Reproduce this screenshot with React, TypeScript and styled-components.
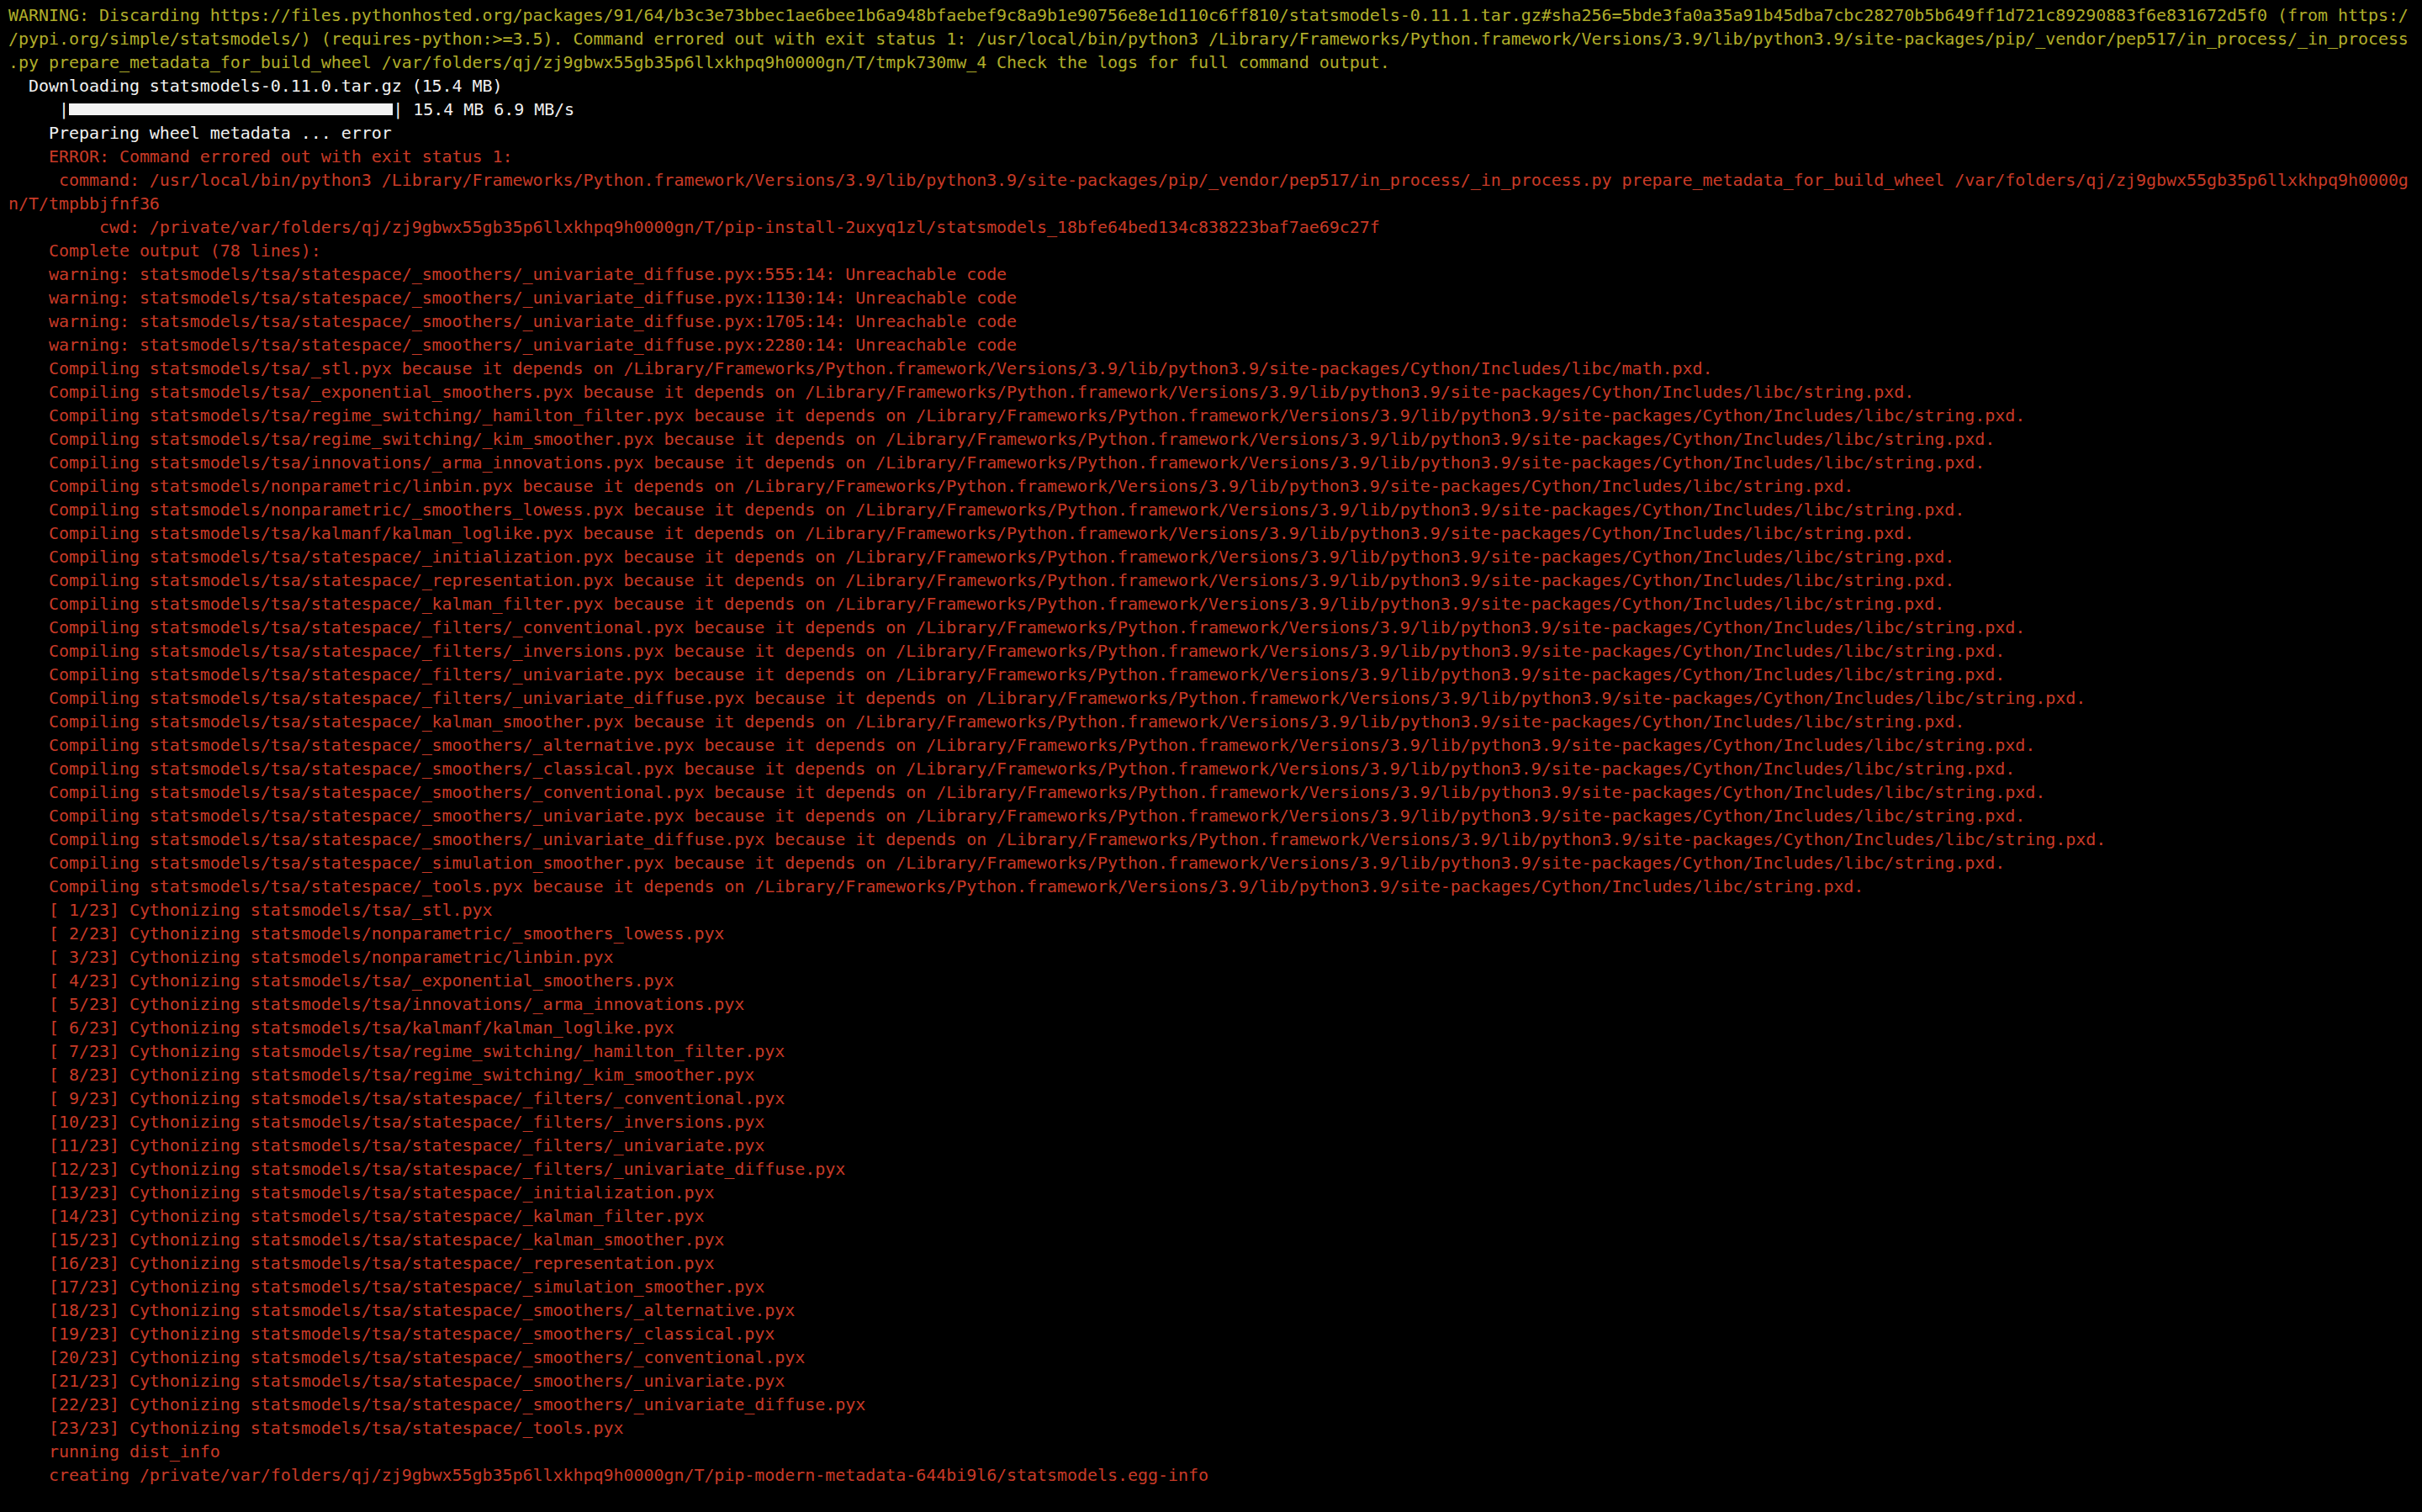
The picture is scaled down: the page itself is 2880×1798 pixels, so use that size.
import React from 'react';
import styled, { createGlobalStyle } from 'styled-components';

const GlobalStyle = createGlobalStyle`
  html, body {
    margin: 0;
    padding: 0;
    background: #000;
  }
`;

type Tone = 'warn' | 'plain' | 'error';

const TONES: Record<Tone, string> = {
  warn: '#b0ad2a',
  plain: '#f0f0f0',
  error: '#c83a27',
};

// Terminal window
const Screen = styled.div`
  box-sizing: border-box;
  width: 2880px;
  height: 1798px;
  overflow: hidden;
  background: #000;
  padding: 4px 0 0 10px;
  font-family: 'DejaVu Sans Mono', 'Liberation Mono', monospace;
  font-size: 20px;
  line-height: 28px;
  letter-spacing: -0.05px;
`;

const Line = styled.div<{ $tone: Tone }>`
  white-space: pre;
  height: 28px;
  color: ${props => TONES[props.$tone]};
`;

const Bar = styled.span`
  display: inline-block;
  width: 32ch;
  height: 14px;
  background: #f2f2f2;
`;

const LIB = '/Library/Frameworks/Python.framework/Versions/3.9/lib/python3.9/site-packages';
const TMP = '/var/folders/qj/zj9gbwx55gb35p6llxkhpq9h0000gn/T';

const header: { text: string; tone: Tone }[] = [
  {
    tone: 'warn',
    text: 'WARNING: Discarding https://files.pythonhosted.org/packages/91/64/b3c3e73bbec1ae6bee1b6a948bfaebef9c8a9b1e90756e8e1d110c6ff810/statsmodels-0.11.1.tar.gz#sha256=5bde3fa0a35a91b45dba7cbc28270b5b649ff1d721c89290883f6e831672d5f0 (from https:/',
  },
  {
    tone: 'warn',
    text: `/pypi.org/simple/statsmodels/) (requires-python:>=3.5). Command errored out with exit status 1: /usr/local/bin/python3 ${LIB}/pip/_vendor/pep517/in_process/_in_process`,
  },
  {
    tone: 'warn',
    text: `.py prepare_metadata_for_build_wheel ${TMP}/tmpk730mw_4 Check the logs for full command output.`,
  },
  { tone: 'plain', text: '  Downloading statsmodels-0.11.0.tar.gz (15.4 MB)' },
];

const compiled = [
  'tsa/_stl.pyx',
  'tsa/_exponential_smoothers.pyx',
  'tsa/regime_switching/_hamilton_filter.pyx',
  'tsa/regime_switching/_kim_smoother.pyx',
  'tsa/innovations/_arma_innovations.pyx',
  'nonparametric/linbin.pyx',
  'nonparametric/_smoothers_lowess.pyx',
  'tsa/kalmanf/kalman_loglike.pyx',
  'tsa/statespace/_initialization.pyx',
  'tsa/statespace/_representation.pyx',
  'tsa/statespace/_kalman_filter.pyx',
  'tsa/statespace/_filters/_conventional.pyx',
  'tsa/statespace/_filters/_inversions.pyx',
  'tsa/statespace/_filters/_univariate.pyx',
  'tsa/statespace/_filters/_univariate_diffuse.pyx',
  'tsa/statespace/_kalman_smoother.pyx',
  'tsa/statespace/_smoothers/_alternative.pyx',
  'tsa/statespace/_smoothers/_classical.pyx',
  'tsa/statespace/_smoothers/_conventional.pyx',
  'tsa/statespace/_smoothers/_univariate.pyx',
  'tsa/statespace/_smoothers/_univariate_diffuse.pyx',
  'tsa/statespace/_simulation_smoother.pyx',
  'tsa/statespace/_tools.pyx',
];

const cythonized = [
  'tsa/_stl.pyx',
  'nonparametric/_smoothers_lowess.pyx',
  'nonparametric/linbin.pyx',
  'tsa/_exponential_smoothers.pyx',
  'tsa/innovations/_arma_innovations.pyx',
  'tsa/kalmanf/kalman_loglike.pyx',
  'tsa/regime_switching/_hamilton_filter.pyx',
  'tsa/regime_switching/_kim_smoother.pyx',
  'tsa/statespace/_filters/_conventional.pyx',
  'tsa/statespace/_filters/_inversions.pyx',
  'tsa/statespace/_filters/_univariate.pyx',
  'tsa/statespace/_filters/_univariate_diffuse.pyx',
  'tsa/statespace/_initialization.pyx',
  'tsa/statespace/_kalman_filter.pyx',
  'tsa/statespace/_kalman_smoother.pyx',
  'tsa/statespace/_representation.pyx',
  'tsa/statespace/_simulation_smoother.pyx',
  'tsa/statespace/_smoothers/_alternative.pyx',
  'tsa/statespace/_smoothers/_classical.pyx',
  'tsa/statespace/_smoothers/_conventional.pyx',
  'tsa/statespace/_smoothers/_univariate.pyx',
  'tsa/statespace/_smoothers/_univariate_diffuse.pyx',
  'tsa/statespace/_tools.pyx',
];

const errorLines: string[] = [
  '    ERROR: Command errored out with exit status 1:',
  `     command: /usr/local/bin/python3 ${LIB}/pip/_vendor/pep517/in_process/_in_process.py prepare_metadata_for_build_wheel /var/folders/qj/zj9gbwx55gb35p6llxkhpq9h0000g`,
  'n/T/tmpbbjfnf36',
  `         cwd: /private${TMP}/pip-install-2uxyq1zl/statsmodels_18bfe64bed134c838223baf7ae69c27f`,
  '    Complete output (78 lines):',
  ...[555, 1130, 1705, 2280].map(
    n => `    warning: statsmodels/tsa/statespace/_smoothers/_univariate_diffuse.pyx:${n}:14: Unreachable code`
  ),
  ...compiled.map(
    (f, i) =>
      `    Compiling statsmodels/${f} because it depends on ${LIB}/Cython/Includes/libc/${i === 0 ? 'math' : 'string'}.pxd.`
  ),
  ...cythonized.map(
    (f, i) => `    [${String(i + 1).padStart(2, ' ')}/23] Cythonizing statsmodels/${f}`
  ),
  '    running dist_info',
  `    creating /private${TMP}/pip-modern-metadata-644bi9l6/statsmodels.egg-info`,
];

const App: React.FC = () => (
  <>
    <GlobalStyle />
    <Screen>
      {header.map((l, i) => (
        <Line key={`h${i}`} $tone={l.tone}>{l.text}</Line>
      ))}
      <Line $tone="plain">
        {'     |'}
        <Bar />
        {'| 15.4 MB 6.9 MB/s'}
      </Line>
      <Line $tone="plain">{'    Preparing wheel metadata ... error'}</Line>
      {errorLines.map((t, i) => (
        <Line key={`e${i}`} $tone="error">{t}</Line>
      ))}
    </Screen>
  </>
);

export default App;
